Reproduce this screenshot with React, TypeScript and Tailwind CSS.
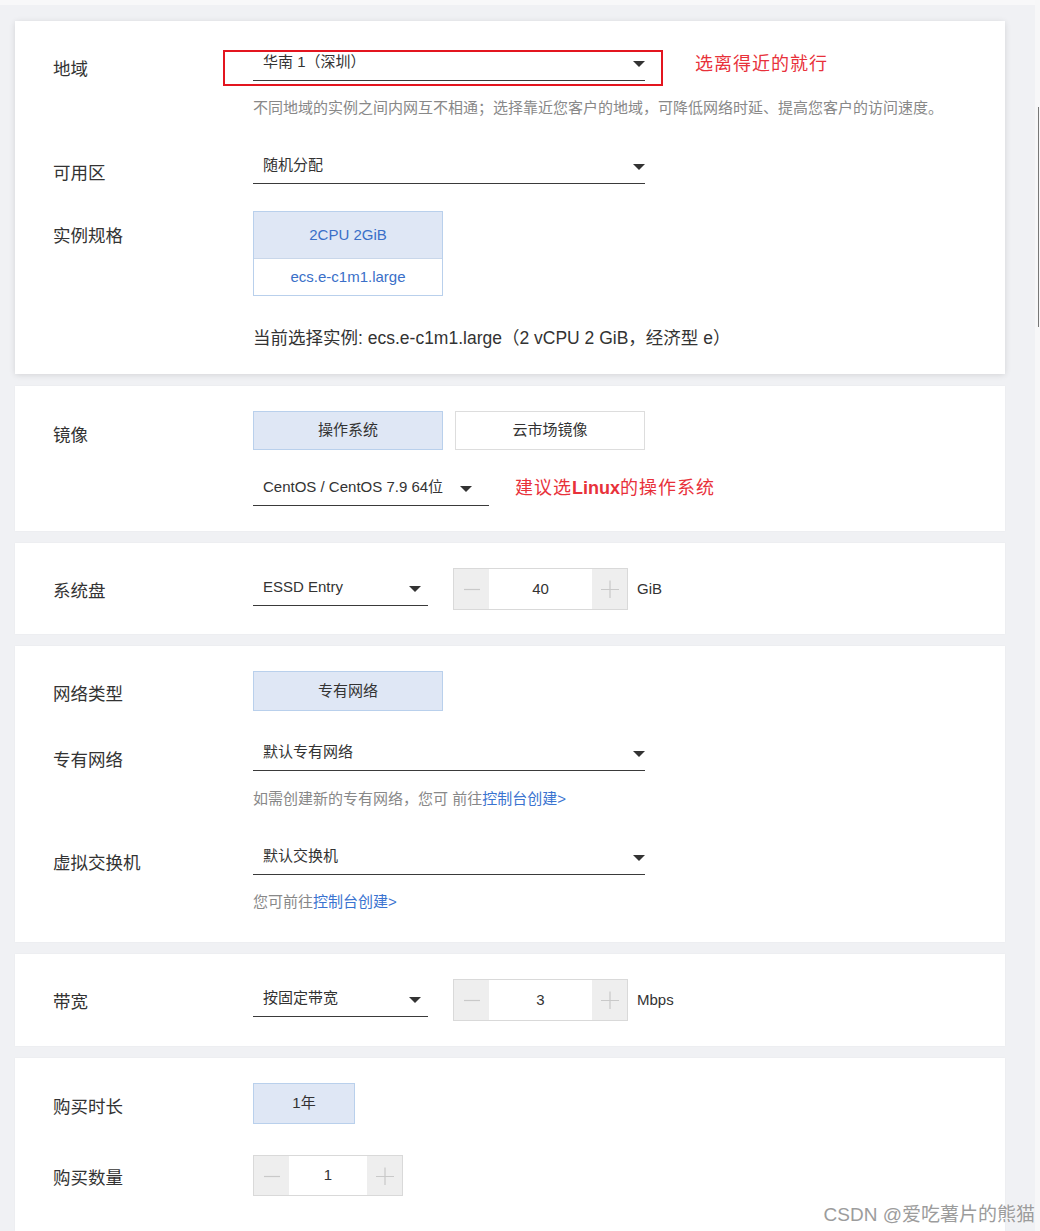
import React from 'react';

const Arrow = () => (
  <svg width="12" height="6" viewBox="0 0 12 6" className="mt-[3px] shrink-0">
    <path d="M0 0H12L6 6Z" fill="#333" />
  </svg>
);

const MinusIcon = () => (
  <svg width="16" height="16" viewBox="0 0 16 16">
    <path d="M0 8.5H16" stroke="#c9c9c9" strokeWidth="1.2" />
  </svg>
);

const PlusIcon = () => (
  <svg width="18" height="18" viewBox="0 0 18 18">
    <path d="M0 9.5H18M9 0.5V18.5" stroke="#c9c9c9" strokeWidth="1.2" />
  </svg>
);

function Select({ text, className }: { text: string; className: string }) {
  return (
    <div
      className={`flex h-[36px] items-center justify-between border-b border-[#3a3a3a] pl-[10px] text-[15px] text-[#333] ${className}`}
    >
      <span>{text}</span>
      <Arrow />
    </div>
  );
}

function Stepper({ value, className }: { value: string; className: string }) {
  return (
    <div className={`flex border border-[#d9d9d9] ${className}`}>
      <div className="flex w-[35px] items-center justify-center bg-[#eeeeee]">
        <MinusIcon />
      </div>
      <div className="flex flex-1 items-center justify-center bg-white text-[15px] text-[#333]">{value}</div>
      <div className="flex w-[35px] items-center justify-center bg-[#eeeeee]">
        <PlusIcon />
      </div>
    </div>
  );
}

const labelCls = 'w-[200px] shrink-0 text-[17.5px] leading-[24px] text-[#333]';
const hintCls = 'text-[15px] leading-[20px] text-[#888]';
const redCls = 'text-[18px] leading-[24px] tracking-[1px] text-[#e8313a] whitespace-nowrap';
const selectedBtn =
  'flex items-center justify-center border border-[#b9d0ec] bg-[#dfe7f5] text-[15px] text-[#333]';

export default function App() {
  return (
    <div className="flex h-[1231px] w-[1040px] overflow-hidden bg-[#f0f1f4] font-['Liberation_Sans','Noto_Sans_CJK_SC',sans-serif]">
      <div className="relative flex flex-1 flex-col">
        <div className="h-[5px] bg-[#f8f8f9]" />
        <div className="flex flex-1 flex-col gap-[12px] pl-[15px] pt-[16px]">
          {/* 地域 / 可用区 / 实例规格 */}
          <div className="w-[990px] bg-white pb-[24px] pl-[38px] pt-[24px] shadow-[0_1px_6px_rgba(0,0,0,0.12)]">
            <div className="flex">
              <div className={`${labelCls} pt-[12px]`}>地域</div>
              <div>
                <div className="relative w-[392px]">
                  <Select text="华南 1（深圳）" className="w-[392px]" />
                  <div className="absolute left-[-30px] top-[5px] h-[36px] w-[440px] border-2 border-[#e3151f]" />
                  <span className={`absolute left-[442px] top-[7px] ${redCls}`}>选离得近的就行</span>
                </div>
                <p className={`mt-[17px] ${hintCls}`}>
                  不同地域的实例之间内网互不相通；选择靠近您客户的地域，可降低网络时延、提高您客户的访问速度。
                </p>
              </div>
            </div>

            <div className="mt-[30px] flex">
              <div className={`${labelCls} pt-[13px]`}>可用区</div>
              <Select text="随机分配" className="w-[392px]" />
            </div>

            <div className="mt-[26px] flex">
              <div className={`${labelCls} pt-[13px]`}>实例规格</div>
              <div>
                <div className="w-[190px] border border-[#b9d0ec] text-[15px] text-[#3a6fc8]">
                  <div className="flex h-[47px] items-center justify-center border-b border-[#c9d7ea] bg-[#dfe7f5]">
                    2CPU 2GiB
                  </div>
                  <div className="flex h-[36px] items-center justify-center bg-white">ecs.e-c1m1.large</div>
                </div>
                <p className="mt-[30px] text-[17.5px] leading-[24px] text-[#333]">
                  当前选择实例: ecs.e-c1m1.large（2 vCPU 2 GiB，经济型 e）
                </p>
              </div>
            </div>
          </div>

          {/* 镜像 */}
          <div className="w-[990px] bg-white pb-[25px] pl-[38px] pt-[25px] shadow-[0_0_2px_rgba(0,0,0,0.04)]">
            <div className="flex">
              <div className={`${labelCls} pt-[12px]`}>镜像</div>
              <div>
                <div className="flex gap-[12px]">
                  <div className={`h-[39px] w-[190px] ${selectedBtn}`}>操作系统</div>
                  <div className="flex h-[39px] w-[190px] items-center justify-center border border-[#dddddd] bg-white text-[15px] text-[#333]">
                    云市场镜像
                  </div>
                </div>
                <div className="relative mt-[20px] w-[236px]">
                  <Select text="CentOS / CentOS 7.9 64位" className="w-[236px] pr-[17px]" />
                  <span className={`absolute left-[262px] top-[6px] ${redCls}`}>
                    建议选<b className="font-bold tracking-normal">Linux</b>的操作系统
                  </span>
                </div>
              </div>
            </div>
          </div>

          {/* 系统盘 */}
          <div className="w-[990px] bg-white pb-[24px] pl-[38px] pt-[25px] shadow-[0_0_2px_rgba(0,0,0,0.04)]">
            <div className="flex">
              <div className={`${labelCls} pt-[11px]`}>系统盘</div>
              <div className="flex items-start">
                <Select text="ESSD Entry" className="mt-[2px] w-[175px] pr-[7px]" />
                <div className="ml-[25px] flex items-center">
                  <Stepper value="40" className="h-[42px] w-[175px]" />
                  <span className="ml-[9px] text-[15px] text-[#333]">GiB</span>
                </div>
              </div>
            </div>
          </div>

          {/* 网络 */}
          <div className="w-[990px] bg-white pb-[30px] pl-[38px] pt-[25px] shadow-[0_0_2px_rgba(0,0,0,0.04)]">
            <div className="flex">
              <div className={`${labelCls} pt-[11px]`}>网络类型</div>
              <div className={`h-[40px] w-[190px] ${selectedBtn}`}>专有网络</div>
            </div>

            <div className="mt-[24px] flex">
              <div className={`${labelCls} pt-[13px]`}>专有网络</div>
              <div>
                <Select text="默认专有网络" className="w-[392px]" />
                <p className={`mt-[18px] ${hintCls}`}>
                  如需创建新的专有网络，您可 前往<span className="text-[#3a73d0]">控制台创建&gt;</span>
                </p>
              </div>
            </div>

            <div className="mt-[30px] flex">
              <div className={`${labelCls} pt-[12px]`}>虚拟交换机</div>
              <div>
                <Select text="默认交换机" className="w-[392px]" />
                <p className={`mt-[17px] ${hintCls}`}>
                  您可前往<span className="text-[#3a73d0]">控制台创建&gt;</span>
                </p>
              </div>
            </div>
          </div>

          {/* 带宽 */}
          <div className="w-[990px] bg-white pb-[25px] pl-[38px] pt-[25px] shadow-[0_0_2px_rgba(0,0,0,0.04)]">
            <div className="flex">
              <div className={`${labelCls} pt-[11px]`}>带宽</div>
              <div className="flex items-start">
                <Select text="按固定带宽" className="mt-[2px] w-[175px] pr-[7px]" />
                <div className="ml-[25px] flex items-center">
                  <Stepper value="3" className="h-[42px] w-[175px]" />
                  <span className="ml-[9px] text-[15px] text-[#333]">Mbps</span>
                </div>
              </div>
            </div>
          </div>

          {/* 购买 */}
          <div className="w-[990px] flex-1 bg-white pl-[38px] pt-[25px] shadow-[0_0_2px_rgba(0,0,0,0.04)]">
            <div className="flex">
              <div className={`${labelCls} pt-[12px]`}>购买时长</div>
              <div className={`h-[41px] w-[102px] ${selectedBtn}`}>1年</div>
            </div>
            <div className="mt-[31px] flex">
              <div className={`${labelCls} pt-[11px]`}>购买数量</div>
              <Stepper value="1" className="h-[41px] w-[150px]" />
            </div>
          </div>
        </div>

        <span className="absolute bottom-[4px] right-[0px] text-[19px] leading-[24px] text-[#9c9c9c] [text-shadow:0_0_2px_#ffffff]">
          CSDN @爱吃薯片的熊猫
        </span>
      </div>

      <div className="flex w-[5px] flex-col bg-[#f7f7f8]">
        <div className="ml-[3px] mt-[107px] h-[220px] w-[1px] bg-[#777]" />
      </div>
    </div>
  );
}
